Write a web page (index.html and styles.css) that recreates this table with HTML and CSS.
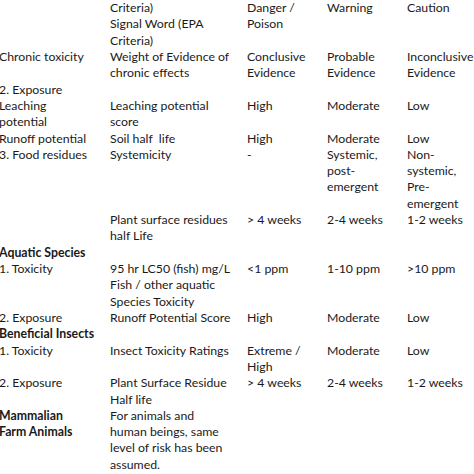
FILE: index.html
```html
<!DOCTYPE html>
<html>
<head>
<meta charset="utf-8">
<link rel="stylesheet" href="styles.css">
</head>
<body>
<div class="table">
  <div class="c"></div>
  <div class="c">Criteria)<br>Signal Word (EPA<br>Criteria)</div>
  <div class="c">Danger /<br>Poison</div>
  <div class="c">Warning</div>
  <div class="c">Caution</div>

  <div class="c">Chronic toxicity</div>
  <div class="c">Weight of Evidence of<br>chronic effects</div>
  <div class="c">Conclusive<br>Evidence</div>
  <div class="c">Probable<br>Evidence</div>
  <div class="c">Inconclusive<br>Evidence</div>

  <div class="c full">2. Exposure</div>

  <div class="c">Leaching<br>potential</div>
  <div class="c">Leaching potential<br>score</div>
  <div class="c">High</div>
  <div class="c">Moderate</div>
  <div class="c">Low</div>

  <div class="c">Runoff potential</div>
  <div class="c">Soil half&nbsp; life</div>
  <div class="c">High</div>
  <div class="c">Moderate</div>
  <div class="c">Low</div>

  <div class="c">3. Food residues</div>
  <div class="c">Systemicity</div>
  <div class="c">-</div>
  <div class="c">Systemic,<br>post-<br>emergent</div>
  <div class="c">Non-<br>systemic,<br>Pre-<br>emergent</div>

  <div class="c"></div>
  <div class="c">Plant surface residues<br>half Life</div>
  <div class="c">&gt; 4 weeks</div>
  <div class="c">2-4 weeks</div>
  <div class="c">1-2 weeks</div>

  <div class="c full b">Aquatic Species</div>

  <div class="c">1. Toxicity</div>
  <div class="c">95 hr LC50 (fish) mg/L<br>Fish / other aquatic<br>Species Toxicity</div>
  <div class="c">&lt;1 ppm</div>
  <div class="c">1-10 ppm</div>
  <div class="c">&gt;10 ppm</div>

  <div class="c">2. Exposure</div>
  <div class="c">Runoff Potential Score</div>
  <div class="c">High</div>
  <div class="c">Moderate</div>
  <div class="c">Low</div>

  <div class="c full b">Beneficial Insects</div>

  <div class="c">1. Toxicity</div>
  <div class="c">Insect Toxicity Ratings</div>
  <div class="c">Extreme /<br>High</div>
  <div class="c">Moderate</div>
  <div class="c">Low</div>

  <div class="c">2. Exposure</div>
  <div class="c">Plant Surface Residue<br>Half life</div>
  <div class="c">&gt; 4 weeks</div>
  <div class="c">2-4 weeks</div>
  <div class="c">1-2 weeks</div>

  <div class="c b">Mammalian<br>Farm Animals</div>
  <div class="c span4">For animals and<br>human beings, same<br>level of risk has been<br>assumed.</div>
</div>
</body>
</html>
```
FILE: styles.css
```css
html, body {
  margin: 0;
  padding: 0;
  background: #ffffff;
}
body {
  font-family: Lato, "Liberation Sans", sans-serif;
  font-size: 12.3px;
  line-height: 16.32px;
  color: #1a1a1a;
  overflow: hidden;
}
.table {
  display: grid;
  grid-template-columns: 111px 137px 80px 80px 80px;
  margin-left: -1px;
  padding-top: 0;
}
.c {
  white-space: nowrap;
}
.full {
  grid-column: 1 / -1;
}
.span4 {
  grid-column: 2 / -1;
}
.b {
  font-weight: bold;
}
```
